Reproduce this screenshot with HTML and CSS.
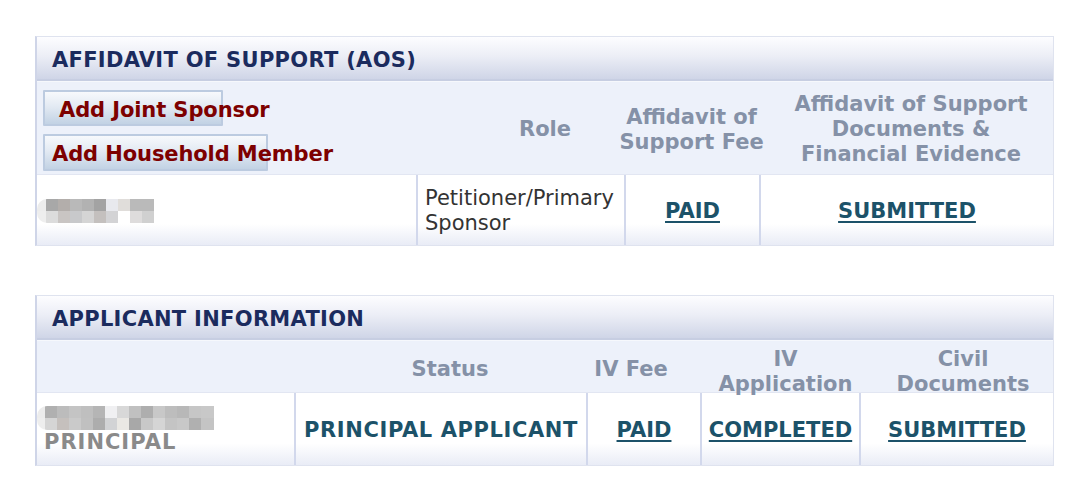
FILE: index.html
```html
<!DOCTYPE html>
<html lang="en">
<head>
<meta charset="utf-8">
<title>Case Status</title>
<link rel="stylesheet" href="styles.css">
</head>
<body>
<div class="page">
  <section class="panel aos">
    <div class="panel-title">AFFIDAVIT OF SUPPORT (AOS)</div>
    <div class="row head-row">
      <div class="cell c-actions">
        <button class="btn btn-joint" type="button">Add Joint Sponsor</button>
        <button class="btn btn-house" type="button">Add Household Member</button>
      </div>
      <div class="cell hd c-role">Role</div>
      <div class="cell hd c-fee">Affidavit of<br>Support Fee</div>
      <div class="cell hd c-docs">Affidavit of Support<br>Documents &amp;<br>Financial Evidence</div>
    </div>
    <div class="row data-row">
      <div class="cell c-name"><div class="blur blur-a"></div></div>
      <div class="cell sep c-roletext">Petitioner/Primary<br>Sponsor</div>
      <div class="cell sep c-center"><a href="#" class="status">PAID</a></div>
      <div class="cell sep c-center"><a href="#" class="status">SUBMITTED</a></div>
    </div>
  </section>

  <section class="panel applicant">
    <div class="panel-title">APPLICANT INFORMATION</div>
    <div class="row head-row">
      <div class="cell hd"></div>
      <div class="cell hd h-status">Status</div>
      <div class="cell hd h-ivfee">IV Fee</div>
      <div class="cell hd h-ivapp">IV<br>Application</div>
      <div class="cell hd h-civil">Civil<br>Documents</div>
    </div>
    <div class="row data-row">
      <div class="cell c-name2">
        <div class="blur blur-b"></div>
        <div class="principal">PRINCIPAL</div>
      </div>
      <div class="cell sep c-center"><span class="status plain">PRINCIPAL APPLICANT</span></div>
      <div class="cell sep c-center"><a href="#" class="status">PAID</a></div>
      <div class="cell sep c-center"><a href="#" class="status">COMPLETED</a></div>
      <div class="cell sep c-center"><a href="#" class="status">SUBMITTED</a></div>
    </div>
  </section>
</div>
</body>
</html>
```

FILE: styles.css
```css
* { box-sizing: border-box; }

html, body {
  margin: 0;
  padding: 0;
  background: #ffffff;
}

body {
  font-family: "DejaVu Sans", Verdana, sans-serif;
  font-size: 21px;
  color: #333333;
}

.page {
  padding: 36px 0 0 35px;
  width: 1054px;
  display: flex;
  flex-direction: column;
  gap: 49px;
}

.panel {
  width: 1019px;
  border: 1px solid #dfe3ef;
  border-left: 2px solid #cfd5e8;
  background: #ffffff;
}

.panel-title {
  height: 44px;
  padding: 3px 0 0 15px;
  display: flex;
  align-items: center;
  font-weight: bold;
  font-size: 21px;
  letter-spacing: 0.3px;
  color: #1b2b5e;
  background: linear-gradient(to bottom, #fdfdff 0%, #eceef6 45%, #cfd5e7 100%);
  border-bottom: 2px solid #c7cee2;
}

.row {
  display: grid;
}

.aos .row {
  grid-template-columns: 379px 208px 135px 1fr;
}

.applicant .row {
  grid-template-columns: 257px 292px 114px 159px 1fr;
}

.head-row {
  background: #edf1fa;
  border-top: 1px solid #f6f8fc;
}

.aos .head-row { height: 93px; }
.applicant .head-row { height: 52px; }

.cell.hd {
  display: flex;
  align-items: center;
  justify-content: center;
  text-align: center;
  font-weight: bold;
  color: #8591a7;
  line-height: 25px;
  white-space: nowrap;
}

.c-actions {
  padding: 8px 0 0 6px;
  display: flex;
  flex-direction: column;
  align-items: flex-start;
  gap: 8px;
}

.btn {
  height: 36px;
  margin: 0;
  padding: 0;
  text-align: left;
  font-family: "DejaVu Sans", Verdana, sans-serif;
  font-weight: bold;
  font-size: 21px;
  letter-spacing: -0.1px;
  color: #7d0000;
  white-space: nowrap;
  overflow: visible;
  border: 2px solid #bccbe0;
  border-radius: 1px;
  background: linear-gradient(to bottom, #f7f9fc 0%, #e3eaf3 45%, #c2d2e4 100%);
  cursor: pointer;
}

.btn-joint { width: 180px; padding: 3px 0 0 14px; }
.btn-house { width: 225px; height: 37px; padding: 3px 0 0 7px; }

.c-role { padding-left: 50px; padding-top: 2px; }
.c-fee { padding-top: 3px; }
.c-docs { padding-left: 10px; padding-top: 2px; }

.data-row {
  background: linear-gradient(to bottom, #ffffff 0%, #ffffff 70%, #e9ecf6 100%);
  border-top: 1px solid #e2e6f2;
}

.aos .data-row { height: 71px; }
.applicant .data-row { height: 73px; }

.cell.sep {
  border-left: 2px solid #d2d8ec;
}

.c-name {
  display: flex;
  align-items: center;
  padding-left: 0;
}

.c-roletext {
  padding: 11px 0 0 7px;
  line-height: 25px;
  color: #333333;
}

.c-center {
  display: flex;
  align-items: center;
  justify-content: center;
  padding-top: 2px;
}

.status {
  font-weight: bold;
  color: #1c5269;
  text-decoration: underline;
  text-underline-offset: 3px;
  text-decoration-thickness: 2px;
  white-space: nowrap;
}

.status.plain {
  text-decoration: none;
  letter-spacing: 0.6px;
}

.blur {
  height: 24px;
  background-repeat: no-repeat;
  background-size: 100% 12px;
  background-position: 0 0, 0 12px;
  border-radius: 10px 0 0 10px;
}

.blur-a {
  width: 117px;
  margin-top: 2px;
  background-image:
    linear-gradient(to right, #ececec 0 9px, #a8a8a8 9px 21px, #b3aeab 21px 33px, #b9b9b9 33px 45px, #b2b2b2 45px 57px, #a3a3a3 57px 69px, #e8e9ee 69px 81px, #e0ddda 81px 93px, #bababa 93px 117px),
    linear-gradient(to right, #eeeeee 0 9px, #dcdcdc 9px 21px, #c9c5c3 21px 33px, #c8c9cb 33px 45px, #d5d5d5 45px 57px, #c4c0be 57px 69px, #d3d3d5 69px 81px, #ffffff 81px 93px, #dedcdc 93px 105px, #d0d0d0 105px 117px);
}

.c-name2 {
  display: flex;
  flex-direction: column;
  justify-content: center;
  padding: 2px 0 0 0;
}

.blur-b {
  width: 177px;
  background-image:
    linear-gradient(to right, #ececec 0 8px, #b0b0b0 8px 20px, #bcbcbc 20px 32px, #c4c4c4 32px 44px, #bfbfbf 44px 56px, #b5b5b5 56px 68px, #f0f0f2 68px 80px, #d8d8d8 80px 92px, #c0c0c0 92px 104px, #aeaeae 104px 116px, #c8c8c8 116px 128px, #bdbdbd 128px 140px, #b8b8b8 140px 152px, #c6c6c6 152px 164px, #c8c8c8 164px 177px),
    linear-gradient(to right, #eeeeee 0 8px, #d5d5d5 8px 20px, #c5c0bd 20px 32px, #cacaca 32px 44px, #c0c0c0 44px 56px, #adadad 56px 68px, #d2d3d5 68px 80px, #eae8e4 80px 92px, #a8a8a8 92px 104px, #c8c8c8 104px 116px, #d5d5d5 116px 128px, #c4c4c4 128px 140px, #c8c8c8 140px 152px, #b0b0b0 152px 164px, #c4c4c4 164px 177px);
}

.principal {
  padding-left: 7px;
  font-weight: bold;
  color: #8a8a8a;
  letter-spacing: 1px;
  line-height: 24px;
}

.h-status { padding-left: 20px; }
.h-ivfee { padding-right: 24px; }
.h-ivapp { padding-left: 12px; padding-top: 6px; }
.h-civil { padding-left: 14px; padding-top: 6px; }
```
